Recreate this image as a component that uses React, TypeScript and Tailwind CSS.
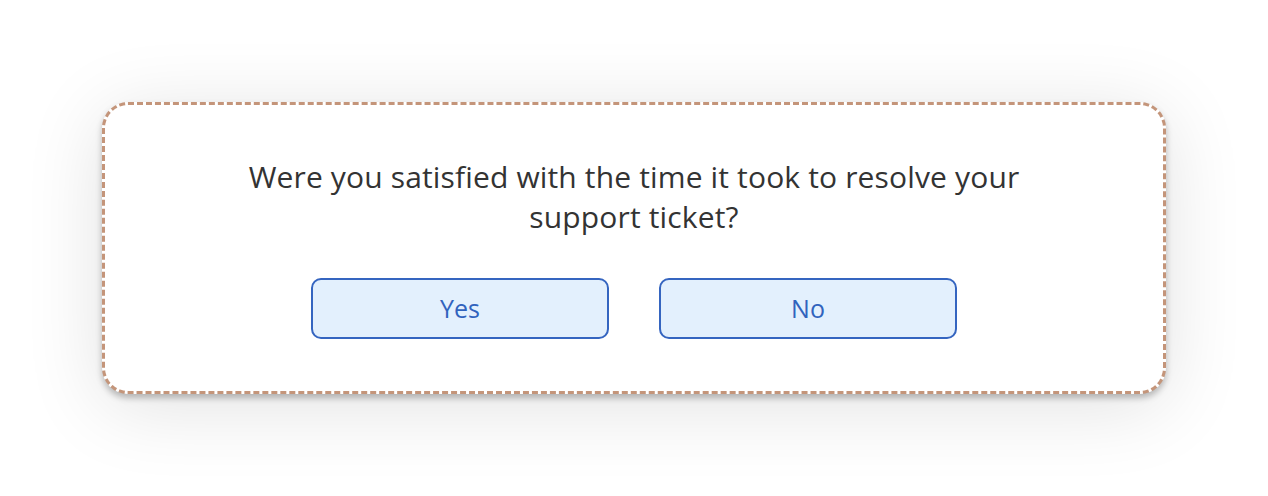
export default function App() {
  return (
    <div className="w-[1268px] h-[496px] bg-white flex items-center justify-center" style={{ fontFamily: '"Open Sans", "Noto Sans", sans-serif' }}>
      <div className="w-[1064px] h-[292px] rounded-[26px] border-[3px] border-dashed border-[#c4957a] bg-white shadow-[0_4px_6px_rgba(0,0,0,0.25),0_12px_80px_rgba(0,0,0,0.12)] flex flex-col items-center justify-center gap-[41px]">
        <p className="w-[820px] text-center text-[30px] leading-[40px] tracking-[0.15px] text-[#333333]">
          Were you satisfied with the time it took to resolve your support ticket?
        </p>
        <div className="flex gap-[50px]">
          <button className="w-[298px] h-[61px] rounded-[10px] border-2 border-[#3565c0] bg-[#e3f0fd] text-[#3163bd] text-[25px]">
            Yes
          </button>
          <button className="w-[298px] h-[61px] rounded-[10px] border-2 border-[#3565c0] bg-[#e3f0fd] text-[#3163bd] text-[25px]">
            No
          </button>
        </div>
      </div>
    </div>
  );
}
